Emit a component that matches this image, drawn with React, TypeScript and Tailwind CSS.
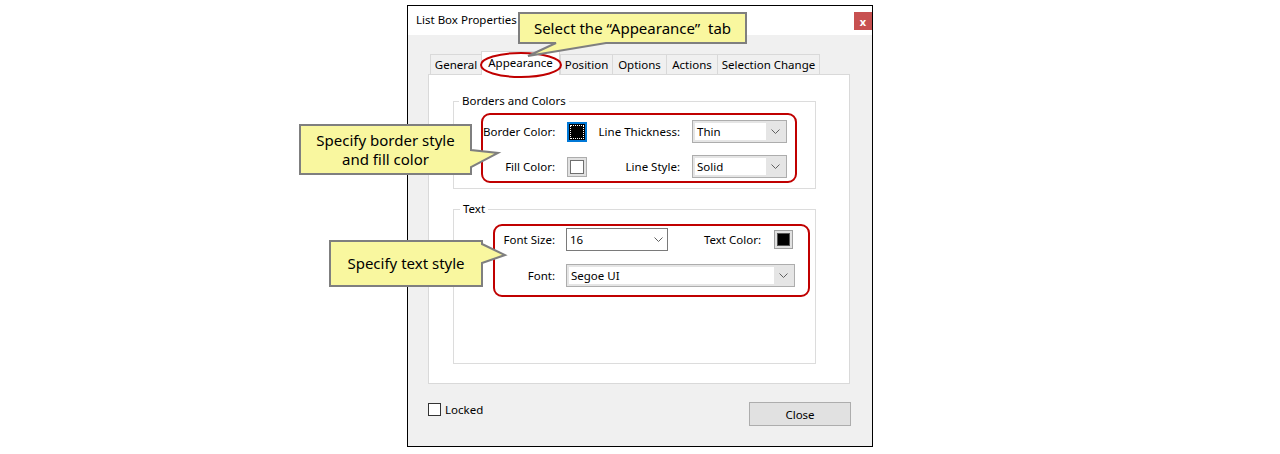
import React from 'react';

const Chevron = () => (
  <svg width="9" height="5" viewBox="0 0 9 5" fill="none">
    <path d="M0.5 0.5 L4.5 4.5 L8.5 0.5" stroke="#606060" strokeWidth="1" />
  </svg>
);

function Combo({ value, width, editable = false }: { value: string; width: string; editable?: boolean }) {
  if (editable) {
    return (
      <div className={`${width} h-[23px] flex items-center border border-[#7a7a7a] bg-white`}>
        <span className="flex-1 pl-[3px] leading-none">{value}</span>
        <span className="w-[18px] flex justify-center">
          <Chevron />
        </span>
      </div>
    );
  }
  return (
    <div className={`${width} h-[23px] flex border border-[#adadad] bg-[#e5e5e5] p-[2px]`}>
      <span className="flex-1 flex items-center bg-white pl-[2px] leading-none">{value}</span>
      <span className="w-[18px] flex items-center justify-center">
        <Chevron />
      </span>
    </div>
  );
}

const tabs = [
  { label: 'General', w: 'w-[51px]' },
  { label: 'Appearance', w: 'w-[79px]', active: true },
  { label: 'Position', w: 'w-[52px]' },
  { label: 'Options', w: 'w-[54px]' },
  { label: 'Actions', w: 'w-[51px]' },
  { label: 'Selection Change', w: 'w-[103px]', last: true },
];

export default function App() {
  return (
    <div className="relative w-[1280px] h-[454px] bg-white text-[11.5px] text-black font-['Noto_Sans',sans-serif] whitespace-nowrap overflow-hidden">
      <div className="flex justify-center pt-[5px]">
        <div className="w-[466px] h-[442px] border border-black flex flex-col">
          {/* title bar */}
          <div className="h-[29px] bg-white flex items-start justify-between">
            <span className="pl-[8px] pt-[7px] leading-[14px] text-[11.5px]">List Box Properties</span>
            <div className="mt-[6px] w-[18px] h-[18px] bg-[#c75050] text-white text-[11px] font-bold flex items-center justify-center leading-none">
              x
            </div>
          </div>

          <div className="flex-1 bg-[#f0f0f0] pl-[20px] pr-[22px] pt-[19px]">
            {/* tabs */}
            <div className="flex items-end h-[20px] ml-[2px]">
              {tabs.map((t) =>
                t.active ? (
                  <div
                    key={t.label}
                    className={`${t.w} h-[24px] -mb-px relative z-10 bg-white border border-b-0 border-[#d9d9d9] flex items-start justify-center pt-[3px] leading-[16px]`}
                  >
                    {t.label}
                  </div>
                ) : (
                  <div
                    key={t.label}
                    className={`${t.w} h-[20px] bg-[#f0f0f0] border-t border-l ${t.last ? 'border-r' : ''} border-[#d9d9d9] flex items-center justify-center leading-none pt-[1px]`}
                  >
                    {t.label}
                  </div>
                )
              )}
            </div>

            {/* panel */}
            <div className="w-[422px] h-[310px] bg-white border border-[#d9d9d9] pl-[24px] pt-[18px]">
              <fieldset className="w-[363px] h-[96px] border border-[#dcdcdc]">
                <legend className="ml-[5px] px-[3px] leading-[16px]">Borders and Colors</legend>
                <div className="ml-[27px] mt-[4px] w-[316px] h-[70px] border-2 border-[#c00000] rounded-[9px] pt-[5px] flex flex-col gap-[12px]">
                  <div className="flex items-center h-[23px]">
                    <span className="w-[72px] text-right">Border Color:</span>
                    <div className="ml-[12px] w-[20px] h-[20px] border-2 border-[#0078d7] bg-black p-[1px]">
                      <div className="w-full h-full border border-dotted border-white" />
                    </div>
                    <span className="w-[93px] text-right">Line Thickness:</span>
                    <div className="ml-[12px]">
                      <Combo value="Thin" width="w-[95px]" />
                    </div>
                  </div>
                  <div className="flex items-center h-[23px]">
                    <span className="w-[72px] text-right">Fill Color:</span>
                    <div className="ml-[12px] w-[20px] h-[20px] border border-[#adadad] bg-[#e1e1e1] p-[2px]">
                      <div className="w-full h-full border border-[#6f6f6f] bg-white" />
                    </div>
                    <span className="w-[93px] text-right">Line Style:</span>
                    <div className="ml-[12px]">
                      <Combo value="Solid" width="w-[95px]" />
                    </div>
                  </div>
                </div>
              </fieldset>

              <fieldset className="mt-[12px] w-[363px] h-[163px] border border-[#dcdcdc]">
                <legend className="ml-[6px] px-[3px] leading-[16px]">Text</legend>
                <div className="ml-[39px] mt-[7px] w-[317px] h-[73px] border-2 border-[#c00000] rounded-[9px] pt-[2px] flex flex-col gap-[13px]">
                  <div className="flex items-center h-[23px]">
                    <span className="w-[60px] text-right">Font Size:</span>
                    <div className="ml-[11px]">
                      <Combo value="16" width="w-[102px]" editable />
                    </div>
                    <span className="w-[93px] text-right">Text Color:</span>
                    <div className="ml-[13px] w-[19px] h-[19px] border border-[#a0a0a0] bg-[#e1e1e1] p-[2px]">
                      <div className="w-full h-full bg-black border border-[#555]" />
                    </div>
                  </div>
                  <div className="flex items-center h-[23px]">
                    <span className="w-[60px] text-right">Font:</span>
                    <div className="ml-[11px]">
                      <Combo value="Segoe UI" width="w-[229px]" />
                    </div>
                  </div>
                </div>
              </fieldset>
            </div>

            {/* footer */}
            <div className="flex items-start justify-between mt-[18px] -mr-px">
              <label className="flex items-center gap-[4px] mt-[1px]">
                <span className="w-[13px] h-[13px] border border-[#333] bg-white" />
                <span className="leading-[13px]">Locked</span>
              </label>
              <button className="w-[102px] h-[24px] bg-[#e1e1e1] border border-[#adadad] flex items-center justify-center pt-[1px]">
                Close
              </button>
            </div>
          </div>
        </div>
      </div>

      {/* annotations */}
      <svg className="absolute inset-0 z-20 pointer-events-none" width="1280" height="454" viewBox="0 0 1280 454">
        <ellipse cx="521" cy="65" rx="40" ry="12" fill="none" stroke="#c00000" strokeWidth="2" />
        <path
          d="M519 13 H746 V43 H606 L528 56 L556 43 H519 Z"
          fill="#f9f79f"
          stroke="#7f7f7f"
          strokeWidth="2"
        />
        <path
          d="M300 125 H471 V150 L498 153 L471 167 V174 H300 Z"
          fill="#f9f79f"
          stroke="#7f7f7f"
          strokeWidth="2"
        />
        <path
          d="M330 241 H482 V244 L505 255 L482 263 V286 H330 Z"
          fill="#f9f79f"
          stroke="#7f7f7f"
          strokeWidth="2"
        />
      </svg>
      <div className="absolute z-30 left-[519px] top-[13px] w-[227px] h-[30px] flex items-center justify-center text-[15px] leading-none">
        Select the “Appearance”&nbsp; tab
      </div>
      <div className="absolute z-30 left-[300px] top-[125px] w-[171px] h-[49px] flex flex-col items-center justify-center text-[15px] leading-[19px]">
        <span>Specify border style</span>
        <span>and fill color</span>
      </div>
      <div className="absolute z-30 left-[330px] top-[241px] w-[152px] h-[45px] flex items-center justify-center text-[15px] leading-none">
        Specify text style
      </div>
    </div>
  );
}
